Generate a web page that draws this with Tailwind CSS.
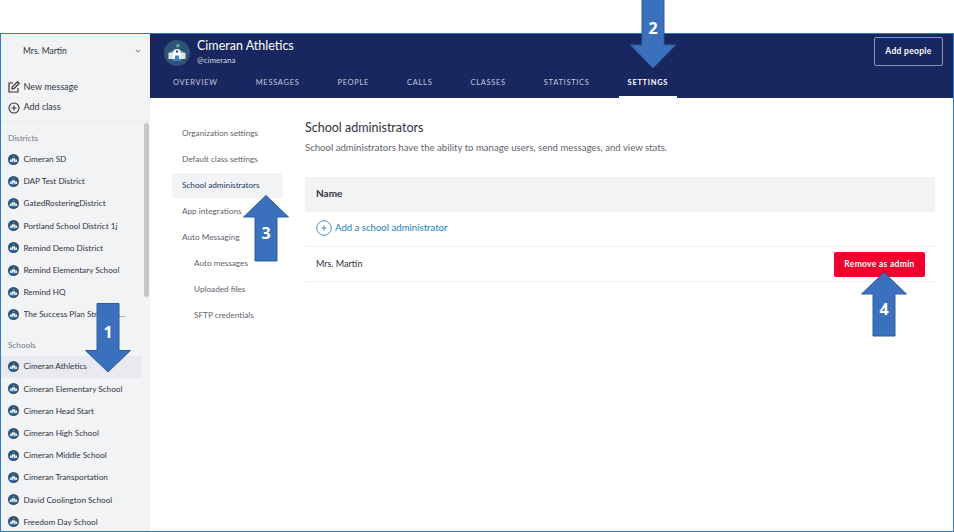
<!DOCTYPE html>
<html lang="en">
<head>
  <meta charset="UTF-8">
  <title>School administrators</title>
  <script src="https://cdn.jsdelivr.net/npm/@tailwindcss/browser@4"></script>
</head>
<body class="bg-white overflow-hidden font-['Lato',sans-serif]">
  <svg class="hidden">
    <symbol id="school" viewBox="0 0 26 26">
      <circle cx="13" cy="13" r="13" fill="#2f5277"/>
      <path d="M13 4.500v3" stroke="#5fc9a8" stroke-width="1"/>
      <path d="M13 4.500h3l-1 1 1 1h-3z" fill="#5fc9a8"/>
      <path d="M9 13a4 4 0 0 1 8 0v6H9z" fill="#fff"/>
      <path d="M4.500 13h4.500v6H4.500zM17 13h4.500v6H17z" fill="#dbe6ea"/>
      <path d="M4 12.500l5-1.500v2zM22 12.500l-5-1.500v2z" fill="#5fc9a8"/>
      <path d="M11 19v-3.500h4V19z" fill="#3f7fc0"/>
      <circle cx="13" cy="11.500" r="1.200" fill="#2f5277"/>
      <path d="M9 19h8l1 2H8z" fill="#3f7fc0"/>
    </symbol>
  </svg>

  <div class="mt-[33px] h-[499px] w-[954px] border border-[#2b7cc4] flex overflow-hidden">
    <!-- Sidebar -->
    <aside class="w-[149px] shrink-0 bg-[#f2f3f5] flex flex-col text-[#2e3440] text-[8.200px] whitespace-nowrap">
      <div class="h-[34px] shrink-0 flex items-center justify-between pl-[22px] pr-[9px] text-[8.500px]">
        <span>Mrs. Martin</span>
        <svg class="w-[6px] h-[4px]" viewBox="0 0 8 5" fill="none" stroke="#444" stroke-width="1"><path d="M1 1l3 3 3-3"/></svg>
      </div>
      <div class="h-[54px] shrink-0 border-b border-[#e8e9ec] flex flex-col gap-[5.500px] pl-[7px] pt-[12px] text-[9px]">
        <div class="flex items-center gap-[3.500px] h-[14px]">
          <svg class="w-[12px] h-[12px]" viewBox="0 0 12 12" fill="none" stroke="#333" stroke-width="1.200"><path d="M10 7v4H1V2h4"/><path d="M4 8l.4-2.200L9.500.8l1.700 1.700-5 5z"/></svg>
          <span>New message</span>
        </div>
        <div class="flex items-center gap-[3.500px] h-[14px]">
          <svg class="w-[12px] h-[12px] mt-[2px]" viewBox="0 0 12 12" fill="none" stroke="#333" stroke-width="1.100"><circle cx="6" cy="6" r="5"/><path d="M6 3.500v5M3.500 6h5"/></svg>
          <span>Add class</span>
        </div>
      </div>
      <div class="flex-1 flex overflow-hidden">
        <div class="w-[141px] shrink-0">
          <div class="pl-[7px] text-[#73777f] mt-[9px] h-[14px] flex items-center">Districts</div>
          <div class="mt-[3px] flex flex-col">
            <div class="h-[22.200px] flex items-center gap-[4.500px] pl-[7px]"><svg class="w-[11px] h-[11px]"><use href="#school"/></svg><span>Cimeran SD</span></div>
            <div class="h-[22.200px] flex items-center gap-[4.500px] pl-[7px]"><svg class="w-[11px] h-[11px]"><use href="#school"/></svg><span>DAP Test District</span></div>
            <div class="h-[22.200px] flex items-center gap-[4.500px] pl-[7px]"><svg class="w-[11px] h-[11px]"><use href="#school"/></svg><span>GatedRosteringDistrict</span></div>
            <div class="h-[22.200px] flex items-center gap-[4.500px] pl-[7px]"><svg class="w-[11px] h-[11px]"><use href="#school"/></svg><span>Portland School District 1j</span></div>
            <div class="h-[22.200px] flex items-center gap-[4.500px] pl-[7px]"><svg class="w-[11px] h-[11px]"><use href="#school"/></svg><span>Remind Demo District</span></div>
            <div class="h-[22.200px] flex items-center gap-[4.500px] pl-[7px]"><svg class="w-[11px] h-[11px]"><use href="#school"/></svg><span>Remind Elementary School</span></div>
            <div class="h-[22.200px] flex items-center gap-[4.500px] pl-[7px]"><svg class="w-[11px] h-[11px]"><use href="#school"/></svg><span>Remind HQ</span></div>
            <div class="h-[22.200px] flex items-center gap-[4.500px] pl-[7px]"><svg class="w-[11px] h-[11px]"><use href="#school"/></svg><span class="w-[104px] truncate">The Success Plan Strategies and Solutions</span></div>
          </div>
          <div class="pl-[7px] text-[#73777f] mt-[13px] h-[14px] flex items-center">Schools</div>
          <div class="mt-[3px] flex flex-col">
            <div class="h-[22.200px] flex items-center gap-[4.500px] pl-[7px] bg-[#e9eaef]"><svg class="w-[11px] h-[11px]"><use href="#school"/></svg><span>Cimeran Athletics</span></div>
            <div class="h-[22.200px] flex items-center gap-[4.500px] pl-[7px]"><svg class="w-[11px] h-[11px]"><use href="#school"/></svg><span>Cimeran Elementary School</span></div>
            <div class="h-[22.200px] flex items-center gap-[4.500px] pl-[7px]"><svg class="w-[11px] h-[11px]"><use href="#school"/></svg><span>Cimeran Head Start</span></div>
            <div class="h-[22.200px] flex items-center gap-[4.500px] pl-[7px]"><svg class="w-[11px] h-[11px]"><use href="#school"/></svg><span>Cimeran High School</span></div>
            <div class="h-[22.200px] flex items-center gap-[4.500px] pl-[7px]"><svg class="w-[11px] h-[11px]"><use href="#school"/></svg><span>Cimeran Middle School</span></div>
            <div class="h-[22.200px] flex items-center gap-[4.500px] pl-[7px]"><svg class="w-[11px] h-[11px]"><use href="#school"/></svg><span>Cimeran Transportation</span></div>
            <div class="h-[22.200px] flex items-center gap-[4.500px] pl-[7px]"><svg class="w-[11px] h-[11px]"><use href="#school"/></svg><span>David Coolington School</span></div>
            <div class="h-[22.200px] flex items-center gap-[4.500px] pl-[7px]"><svg class="w-[11px] h-[11px]"><use href="#school"/></svg><span>Freedom Day School</span></div>
          </div>
        </div>
        <div class="w-[5px] h-[174px] ml-[2px] mt-[1px] rounded-sm bg-[#c6c7c9]"></div>
      </div>
    </aside>

    <div class="flex-1 flex flex-col min-w-0">
      <!-- Header -->
      <header class="h-[64px] shrink-0 bg-[#18275f] text-white flex flex-col">
        <div class="h-[37px] shrink-0 flex items-start justify-between pl-[14px] pr-[10px] pt-[4px]">
          <div class="flex gap-[7px] items-start">
            <svg class="w-[26px] h-[26px] mt-[2px]"><use href="#school"/></svg>
            <div>
              <div class="text-[12.500px] leading-[16px]">Cimeran Athletics</div>
              <div class="text-[8px] leading-[10px] mt-[1px] text-[#d5d8e4]">@cimerana</div>
            </div>
          </div>
          <button class="w-[69px] h-[29px] -mt-[1px] border border-white/50 rounded-[2px] text-[8.500px] font-bold tracking-[0.3px]">Add people</button>
        </div>
        <nav class="flex-1 flex gap-[20px] pl-[14px] text-[7.500px] tracking-[0.700px] text-[#c4c9da]">
          <a class="px-[9px] flex items-center pb-[2px] border-b-2 border-transparent">OVERVIEW</a>
          <a class="px-[9px] flex items-center pb-[2px] border-b-2 border-transparent">MESSAGES</a>
          <a class="px-[9px] flex items-center pb-[2px] border-b-2 border-transparent">PEOPLE</a>
          <a class="px-[9px] flex items-center pb-[2px] border-b-2 border-transparent">CALLS</a>
          <a class="px-[9px] flex items-center pb-[2px] border-b-2 border-transparent">CLASSES</a>
          <a class="px-[9px] flex items-center pb-[2px] border-b-2 border-transparent">STATISTICS</a>
          <a class="px-[9px] flex items-center pb-[2px] border-b-2 border-white font-bold text-white">SETTINGS</a>
        </nav>
      </header>

      <div class="flex-1 flex bg-white">
        <!-- Settings nav -->
        <div class="w-[133px] shrink-0 pl-[22px] pt-[23px] text-[8.200px] text-[#5f636b] flex flex-col">
          <div class="h-[26px] flex items-center pl-[10px] pb-[1px]">Organization settings</div>
          <div class="h-[26px] flex items-center pl-[10px] pb-[1px]">Default class settings</div>
          <div class="h-[25px] mb-[1px] flex items-center pl-[10px] bg-[#f2f3f5] rounded-[3px] text-[#1c3a66]">School administrators</div>
          <div class="h-[26px] flex items-center pl-[10px] pb-[1px]">App integrations</div>
          <div class="h-[26px] flex items-center pl-[10px] pb-[1px]">Auto Messaging</div>
          <div class="h-[26px] flex items-center pl-[22px] pb-[1px]">Auto messages</div>
          <div class="h-[26px] flex items-center pl-[22px] pb-[1px]">Uploaded files</div>
          <div class="h-[26px] flex items-center pl-[22px] pb-[1px]">SFTP credentials</div>
        </div>
        <!-- Content -->
        <main class="flex-1 pl-[22px] pr-[18px] pt-[22px] text-[#2e3440]">
          <h1 class="text-[12.500px] leading-[16px]">School administrators</h1>
          <p class="text-[9.600px] leading-[12px] mt-[6px] text-[#5f636b]">School administrators have the ability to manage users, send messages, and view stats.</p>
          <div class="mt-[23px] h-[35px] bg-[#f2f3f5] flex items-center pl-[11px] pb-[2px] text-[10px] font-bold">Name</div>
          <div class="h-[35px] border-b border-[#eeeff1] flex items-center pl-[11px] pb-[2px] gap-[3px] text-[#1a7fc4] text-[9.600px]">
            <svg class="w-[16px] h-[16px]" viewBox="0 0 16 16" fill="none" stroke="#1a7fc4" stroke-width="0.800"><circle cx="8" cy="8" r="7.300"/><path d="M8 5.500v5M5.500 8h5"/></svg>
            <span>Add a school administrator</span>
          </div>
          <div class="h-[35px] border-b border-[#eeeff1] flex items-center justify-between pl-[11px] pr-[10px] text-[9px]">
            <span>Mrs. Martin</span>
            <button class="w-[91px] h-[25px] bg-[#f0002d] rounded-[2px] text-white text-[8.500px] font-bold tracking-[0.3px]">Remove as admin</button>
          </div>
        </main>
      </div>
    </div>
  </div>

  <!-- Callout arrows drawn over the screenshot -->
  <svg class="absolute left-[85px] top-[303px] w-[46px] h-[70px]" viewBox="0 0 46 70"><path d="M12 .5h22v47h11.500L23 69 .5 47.500H12z" fill="#3b70bd" stroke="#2f5c9e"/><text x="23" y="35" text-anchor="middle" fill="#fff" font-family="Noto Sans" font-weight="700" font-size="16">1</text></svg>
  <svg class="absolute left-[630px] top-0 w-[46px] h-[69px]" viewBox="0 0 46 69"><path d="M12 -1h22v46h11.500L23 68 .5 45H12z" fill="#3b70bd" stroke="#2f5c9e"/><text x="23" y="34" text-anchor="middle" fill="#fff" font-family="Noto Sans" font-weight="700" font-size="16">2</text></svg>
  <svg class="absolute left-[243px] top-[195px] w-[46px] h-[67px]" viewBox="0 0 46 67"><path d="M23 .5L45.500 22H34v44H12V22H.5z" fill="#3b70bd" stroke="#2f5c9e"/><text x="23" y="44" text-anchor="middle" fill="#fff" font-family="Noto Sans" font-weight="700" font-size="16">3</text></svg>
  <svg class="absolute left-[861px] top-[272px] w-[46px] h-[65px]" viewBox="0 0 46 65"><path d="M23 .5L45.500 22H34v42H12V22H.5z" fill="#3b70bd" stroke="#2f5c9e"/><text x="23" y="43" text-anchor="middle" fill="#fff" font-family="Noto Sans" font-weight="700" font-size="16">4</text></svg>
</body>
</html>
